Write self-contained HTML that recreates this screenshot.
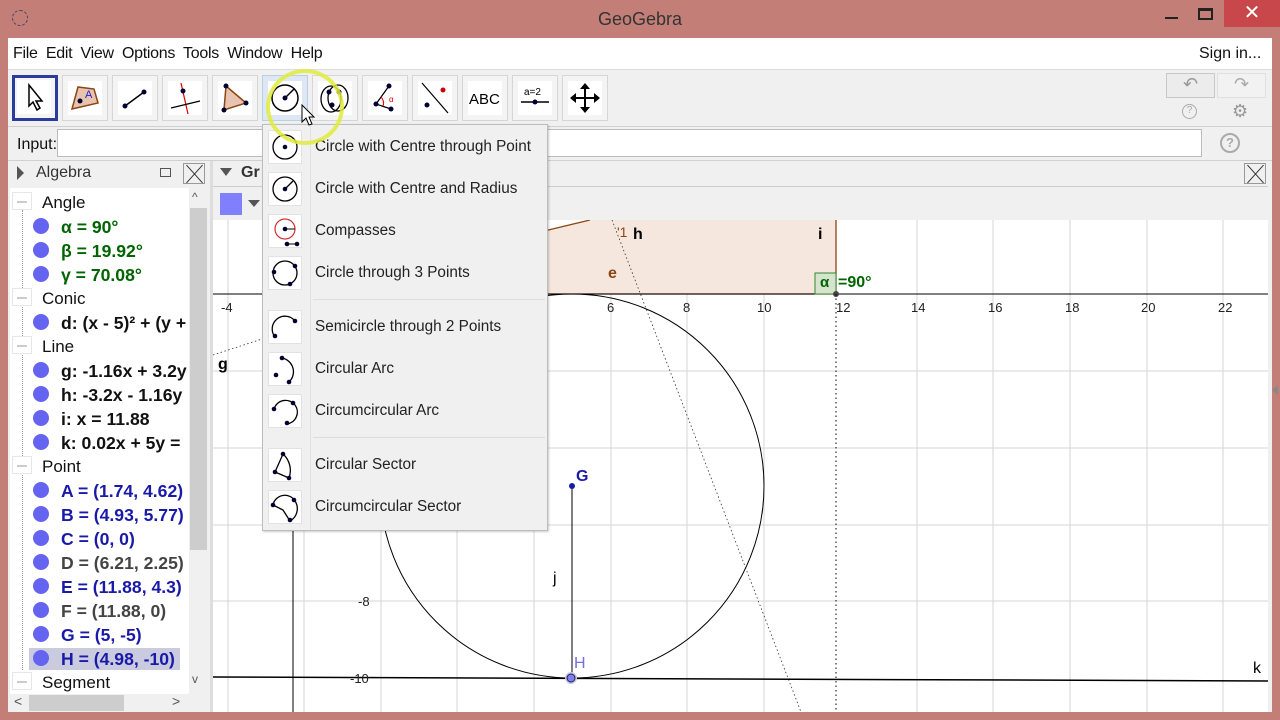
<!DOCTYPE html>
<html><head><meta charset="utf-8"><style>
*{margin:0;padding:0;box-sizing:border-box}
body{width:1280px;height:720px;overflow:hidden;background:#c47e78;font-family:"Liberation Sans",sans-serif;position:relative}
.a{position:absolute}
.tb{position:absolute;top:75px;width:46px;height:46px;background:#f4f4f4;border:1px solid #d6d6d6}
.tb svg{position:absolute;left:5px;top:5px;width:34px;height:34px;background:#fff}
.mi{position:absolute;left:315px;font-size:15.3px;color:#222}
.ib{position:absolute;left:268px;width:34px;height:34px;background:#fff;border:1px solid #e2e2e2}
.al{position:absolute;font-size:17.6px;font-weight:bold;left:61px}
.dot{position:absolute;left:33px;width:16px;height:16px;border-radius:50%;background:#6464f0}
.cat{position:absolute;left:42px;font-size:17px;color:#111}
.minus{position:absolute;left:12px;width:20px;height:18px;border:1px solid #e6e6e6;background:#fff}
.minus:after{content:"";position:absolute;left:4px;top:8px;width:10px;height:2px;background:#ccc}
.x{position:absolute;width:22px;height:21px;border:1px solid #999}
.x:before,.x:after{content:"";position:absolute;left:10px;top:-2px;width:1px;height:24px;background:#333;transform:rotate(42deg)}
.x:after{transform:rotate(-42deg)}
</style></head><body>
<div class="a" style="left:12px;top:10px;width:16px;height:16px;border:1px dashed #446;border-radius:50%"></div>
<div class="a" style="left:0;width:1280px;top:9px;text-align:center;font-size:18px;color:#333">GeoGebra</div>
<div class="a" style="left:1165px;top:17px;width:13px;height:2px;background:#222"></div>
<div class="a" style="left:1198px;top:8px;width:15px;height:12px;border:2px solid #222;border-top-width:3px"></div>
<div class="a" style="left:1224px;top:0;width:56px;height:27px;background:#c7474a;color:#fff;font-size:20px;text-align:center;line-height:27px">✕</div>
<div class="a" style="left:8px;top:38px;width:1264px;height:674px;background:#f0f0f0"></div>
<div class="a" style="left:8px;top:38px;width:1264px;height:32px;background:#fff;border-bottom:1px solid #ddd"></div>
<div class="a" style="left:13px;top:45px;font-size:16px;color:#111;letter-spacing:-0.3px">File&nbsp; Edit&nbsp; View&nbsp; Options&nbsp; Tools&nbsp; Window&nbsp; Help</div>
<div class="a" style="left:1199px;top:45px;font-size:16px;color:#111">Sign in...</div>
<div class="tb" style="left:12px;border:3px solid #2b3d9c"><svg viewBox="0 0 34 34" style="left:2px;top:2px"><path d="M12 5 L12 26 L16 22 L20 30 L23 28 L19 21 L25 21 Z" fill="#fff" stroke="#000" stroke-width="1.5"/></svg></div>
<div class="tb" style="left:62px"><svg viewBox="0 0 34 34"><path d="M4 28 L10 6 L26 8 L30 22 Z" fill="#e8c4b0" stroke="#8b4513" stroke-width="1.5"/><circle cx="12" cy="20" r="2.5" fill="#003"/><text x="17" y="17" font-size="11" fill="#22c" font-family="Liberation Sans">A</text></svg></div>
<div class="tb" style="left:112px"><svg viewBox="0 0 34 34"><line x1="7" y1="25" x2="26" y2="11" stroke="#000" stroke-width="1.5"/><circle cx="7" cy="25" r="2.5" fill="#003"/><circle cx="26" cy="11" r="2.5" fill="#003"/></svg></div>
<div class="tb" style="left:162px"><svg viewBox="0 0 34 34"><line x1="13" y1="2" x2="20" y2="33" stroke="#d00" stroke-width="1.2"/><line x1="3" y1="27" x2="32" y2="20" stroke="#000" stroke-width="1.2"/><circle cx="15" cy="10" r="2.5" fill="#003"/></svg></div>
<div class="tb" style="left:212px"><svg viewBox="0 0 34 34"><path d="M8 5 L28 22 L6 29 Z" fill="#e8c4b0" stroke="#8b4513" stroke-width="1.5"/><circle cx="8" cy="5" r="2.5" fill="#003"/><circle cx="28" cy="22" r="2.5" fill="#003"/><circle cx="6" cy="29" r="2.5" fill="#003"/></svg></div>
<div class="tb" style="left:262px;background:#dde8f4;border-color:#b8cfe6"><svg viewBox="0 0 34 34"><circle cx="17" cy="17" r="13" fill="none" stroke="#000" stroke-width="1.5"/><line x1="17" y1="17" x2="26" y2="8" stroke="#000" stroke-width="1.5"/><circle cx="17" cy="17" r="2.5" fill="#003"/></svg></div>
<div class="tb" style="left:312px"><svg viewBox="0 0 34 34"><ellipse cx="13" cy="18" rx="10" ry="13" fill="none" stroke="#000" stroke-width="1.3"/><ellipse cx="20" cy="17" rx="10" ry="13" fill="none" stroke="#000" stroke-width="1.3"/><circle cx="11" cy="11" r="2.5" fill="#003"/><circle cx="21" cy="11" r="2.5" fill="#003"/><circle cx="14" cy="24" r="2.5" fill="#003"/></svg></div>
<div class="tb" style="left:362px"><svg viewBox="0 0 34 34"><path d="M21 5 L8 23 L23 28" fill="none" stroke="#000" stroke-width="1.3"/><path d="M13 16 A8 8 0 0 1 15 25" fill="#fcc" stroke="#d00"/><circle cx="21" cy="5" r="2.5" fill="#003"/><circle cx="8" cy="23" r="2.5" fill="#003"/><circle cx="23" cy="28" r="2.5" fill="#003"/><text x="21" y="21" font-size="8" fill="#d00">α</text></svg></div>
<div class="tb" style="left:412px"><svg viewBox="0 0 34 34"><line x1="4" y1="2" x2="30" y2="32" stroke="#000" stroke-width="1.2"/><circle cx="25" cy="9" r="2.5" fill="#c00"/><circle cx="9" cy="24" r="2.5" fill="#003"/></svg></div>
<div class="tb" style="left:462px"><svg viewBox="0 0 34 34"><text x="1" y="23" font-size="15" font-family="Liberation Sans" fill="#000">ABC</text></svg></div>
<div class="tb" style="left:512px"><svg viewBox="0 0 34 34"><text x="6" y="14" font-size="10" font-family="Liberation Sans">a=2</text><line x1="3" y1="21" x2="31" y2="21" stroke="#000" stroke-width="1.5"/><circle cx="17" cy="21" r="2.5" fill="#003"/></svg></div>
<div class="tb" style="left:562px"><svg viewBox="0 0 34 34"><path d="M17 4 L17 30 M4 17 L30 17" stroke="#000" stroke-width="2"/><path d="M17 2 L12 8 L22 8Z M17 32 L12 26 L22 26Z M2 17 L8 12 L8 22Z M32 17 L26 12 L26 22Z" fill="#000"/></svg></div>
<div class="a" style="left:1166px;top:73px;width:49px;height:25px;background:#ececec;border:1px solid #c8c8c8;text-align:center;font-size:18px;color:#999">↶</div>
<div class="a" style="left:1217px;top:73px;width:49px;height:25px;background:#f2f2f2;border:1px solid #e0e0e0;text-align:center;font-size:18px;color:#aaa">↷</div>
<div class="a" style="left:1182px;top:104px;width:15px;height:15px;border:1.5px solid #aaa;border-radius:50%;font-size:10px;color:#aaa;text-align:center;line-height:12px">?</div>
<div class="a" style="left:1232px;top:101px;font-size:18px;color:#999">⚙</div>
<div class="a" style="left:8px;top:126px;width:1264px;height:1px;background:#d0d0d0"></div>
<div class="a" style="left:17px;top:136px;font-size:16px;color:#111">Input:</div>
<div class="a" style="left:57px;top:129px;width:1145px;height:28px;background:#fff;border:1px solid #bbb"></div>
<div class="a" style="left:1220px;top:133px;width:20px;height:20px;border:2px solid #aaa;border-radius:50%;font-size:13px;font-weight:bold;color:#aaa;text-align:center;line-height:16px">?</div>
<div class="a" style="left:8px;top:160px;width:1264px;height:1px;background:#d0d0d0"></div>
<div class="a" style="left:17px;top:166px;width:0;height:0;border-left:7px solid #555;border-top:7px solid transparent;border-bottom:7px solid transparent"></div>
<div class="a" style="left:36px;top:164px;font-size:16px;color:#333">Algebra</div>
<div class="a" style="left:160px;top:168px;width:11px;height:9px;border:1.5px solid #555"></div>
<div class="x" style="left:183px;top:163px"></div>
<div class="a" style="left:10px;top:188px;width:179px;height:506px;background:#fff"></div>
<div class="a" style="left:189px;top:188px;width:19px;height:506px;background:#f0f0f0"></div>
<div class="a" style="left:190px;top:208px;width:17px;height:342px;background:#cdcdcd"></div>
<div class="a" style="left:192px;top:190px;font-size:12px;color:#555">^</div>
<div class="a" style="left:192px;top:672px;font-size:12px;color:#555">v</div>
<div class="a" style="left:10px;top:694px;width:198px;height:18px;background:#f0f0f0"></div>
<div class="a" style="left:29px;top:695px;width:95px;height:16px;background:#cdcdcd"></div>
<div class="a" style="left:14px;top:693px;font-size:14px;color:#555">&lt;</div>
<div class="a" style="left:172px;top:693px;font-size:14px;color:#555">&gt;</div>
<div class="a" style="left:22px;top:210px;width:1px;height:460px;border-left:1px dotted #999"></div>
<div class="a" style="left:29px;top:648px;width:151px;height:22px;background:#cbcbe0"></div>
<div class="minus" style="top:192px"></div><div class="cat" style="top:193px">Angle</div>
<div class="dot" style="top:218px"></div><div class="al" style="top:217px;color:#006400">α = 90°</div>
<div class="dot" style="top:242px"></div><div class="al" style="top:241px;color:#006400">β = 19.92°</div>
<div class="dot" style="top:266px"></div><div class="al" style="top:265px;color:#006400">γ = 70.08°</div>
<div class="minus" style="top:288px"></div><div class="cat" style="top:289px">Conic</div>
<div class="dot" style="top:314px"></div><div class="al" style="top:313px;color:#111;white-space:nowrap;width:128px;overflow:hidden">d: (x - 5)² + (y +</div>
<div class="minus" style="top:336px"></div><div class="cat" style="top:337px">Line</div>
<div class="dot" style="top:362px"></div><div class="al" style="top:361px;color:#111;white-space:nowrap;width:128px;overflow:hidden">g: -1.16x + 3.2y</div>
<div class="dot" style="top:386px"></div><div class="al" style="top:385px;color:#111;white-space:nowrap;width:128px;overflow:hidden">h: -3.2x - 1.16y</div>
<div class="dot" style="top:410px"></div><div class="al" style="top:409px;color:#111">i: x = 11.88</div>
<div class="dot" style="top:434px"></div><div class="al" style="top:433px;color:#111;white-space:nowrap;width:128px;overflow:hidden">k: 0.02x + 5y =</div>
<div class="minus" style="top:456px"></div><div class="cat" style="top:457px">Point</div>
<div class="dot" style="top:482px"></div><div class="al" style="top:481px;color:#1a1aa8">A = (1.74, 4.62)</div>
<div class="dot" style="top:506px"></div><div class="al" style="top:505px;color:#1a1aa8">B = (4.93, 5.77)</div>
<div class="dot" style="top:530px"></div><div class="al" style="top:529px;color:#1a1aa8">C = (0, 0)</div>
<div class="dot" style="top:554px"></div><div class="al" style="top:553px;color:#444">D = (6.21, 2.25)</div>
<div class="dot" style="top:578px"></div><div class="al" style="top:577px;color:#1a1aa8">E = (11.88, 4.3)</div>
<div class="dot" style="top:602px"></div><div class="al" style="top:601px;color:#444">F = (11.88, 0)</div>
<div class="dot" style="top:626px"></div><div class="al" style="top:625px;color:#1a1aa8">G = (5, -5)</div>
<div class="dot" style="top:650px"></div><div class="al" style="top:649px;color:#1a1aa8">H = (4.98, -10)</div>
<div class="minus" style="top:672px"></div><div class="cat" style="top:673px">Segment</div>
<div class="a" style="left:210px;top:161px;width:3px;height:551px;background:#ddd"></div>
<div class="a" style="left:220px;top:168px;width:0;height:0;border-top:8px solid #555;border-left:6px solid transparent;border-right:6px solid transparent"></div>
<div class="a" style="left:241px;top:164px;font-size:16px;font-weight:bold;color:#333">Gr</div>
<div class="x" style="left:1244px;top:163px"></div>
<div class="a" style="left:213px;top:186px;width:1055px;height:1px;background:#ccc"></div>
<div class="a" style="left:220px;top:193px;width:22px;height:22px;background:#8080ff"></div>
<div class="a" style="left:248px;top:200px;width:0;height:0;border-top:7px solid #555;border-left:6px solid transparent;border-right:6px solid transparent"></div>
<svg class="a" style="left:213px;top:220px" width="1055" height="492" viewBox="213 220 1055 492">
<rect x="213" y="220" width="1055" height="492" fill="#fff"/>
<g stroke="#d6d6d6" stroke-width="1">
<line x1="228" y1="220" x2="228" y2="712"/><line x1="304" y1="220" x2="304" y2="712"/><line x1="381" y1="220" x2="381" y2="712"/><line x1="457" y1="220" x2="457" y2="712"/><line x1="534" y1="220" x2="534" y2="712"/><line x1="611" y1="220" x2="611" y2="712"/><line x1="687" y1="220" x2="687" y2="712"/><line x1="764" y1="220" x2="764" y2="712"/><line x1="917" y1="220" x2="917" y2="712"/><line x1="993" y1="220" x2="993" y2="712"/><line x1="1070" y1="220" x2="1070" y2="712"/><line x1="1147" y1="220" x2="1147" y2="712"/><line x1="1223" y1="220" x2="1223" y2="712"/>
<line x1="213" y1="371" x2="1268" y2="371"/><line x1="213" y1="448" x2="1268" y2="448"/><line x1="213" y1="525" x2="1268" y2="525"/><line x1="213" y1="601" x2="1268" y2="601"/>
</g>
<path d="M540 232 L590 220 L836 220 L836 294 L540 294Z" fill="#f5e6de"/>
<line x1="540" y1="232" x2="590" y2="220" stroke="#8b4513" stroke-width="1.3"/>
<line x1="540" y1="294" x2="836" y2="294" stroke="#8b4513" stroke-width="1.3"/>
<line x1="836" y1="220" x2="836" y2="294" stroke="#8b4513" stroke-width="1.3"/>
<line x1="213" y1="294" x2="1268" y2="294" stroke="#000" stroke-width="1"/>
<line x1="293" y1="220" x2="293" y2="712" stroke="#000" stroke-width="1"/>
<rect x="815" y="273" width="21" height="21" fill="#d6e3cf" stroke="#2d8b2d"/>
<text x="820" y="287" font-size="15" font-weight="bold" fill="#006400" font-family="Liberation Sans">α</text>
<text x="838" y="287" font-size="16" font-weight="bold" fill="#006400" font-family="Liberation Sans">=90°</text>
<circle cx="836" cy="294" r="3" fill="#444"/>
<line x1="836" y1="294" x2="836" y2="712" stroke="#000" stroke-dasharray="1.5 3"/>
<line x1="612" y1="220" x2="801" y2="712" stroke="#333" stroke-width="0.8" stroke-dasharray="1.5 2.5"/>
<line x1="213" y1="355" x2="265" y2="338" stroke="#333" stroke-width="0.8" stroke-dasharray="1.5 2.5"/>
<circle cx="572" cy="486" r="192" fill="none" stroke="#000" stroke-width="1"/>
<line x1="213" y1="677" x2="1268" y2="681" stroke="#000" stroke-width="1.5"/>
<line x1="572" y1="486" x2="572" y2="678" stroke="#000"/>
<circle cx="572" cy="486" r="3" fill="#1a1aa8"/>
<circle cx="571" cy="678" r="6" fill="#c8c8f0"/><circle cx="571" cy="678" r="4" fill="#8080f0" stroke="#224"/>
<g font-family="Liberation Sans" font-size="13" fill="#222">
<text x="221" y="312">-4</text><text x="607" y="312">6</text><text x="683" y="312">8</text><text x="757" y="312">10</text><text x="836" y="312">12</text><text x="911" y="312">14</text><text x="988" y="312">16</text><text x="1065" y="312">18</text><text x="1141" y="312">20</text><text x="1218" y="312">22</text>
<text x="358" y="606">-8</text><text x="350" y="683">-10</text></g>
<g font-family="Liberation Sans" font-size="16" font-weight="bold">
<text x="633" y="239" fill="#000">h</text><text x="818" y="239" fill="#000">i</text><text x="608" y="278" fill="#8b4513">e</text><text x="218" y="369" fill="#000">g</text><text x="576" y="481" fill="#1a1aa8">G</text></g>
<text x="553" y="583" font-size="16" font-family="Liberation Sans">j</text>
<text x="574" y="668" font-size="16" fill="#7070e0" font-family="Liberation Sans">H</text>
<text x="1253" y="673" font-size="16" font-family="Liberation Sans">k</text>
<text x="617" y="237" font-size="14" fill="#8b4513" font-family="Liberation Sans">'1</text>
</svg>
<div class="a" style="left:1268px;top:186px;width:4px;height:526px;background:#f0f0f0"></div>
<div class="a" style="left:1272px;top:385px;width:0;height:0;border-right:6px solid #888;border-top:5px solid transparent;border-bottom:5px solid transparent"></div>
<div class="a" style="left:262px;top:124px;width:286px;height:407px;background:#f0f0f0;border:1px solid #bdbdbd;box-shadow:1px 1px 2px rgba(0,0,0,.2)"></div>
<div class="a" style="left:310px;top:125px;width:1px;height:405px;background:#e2e2e2"></div>
<div class="a" style="left:313px;top:299px;width:232px;height:1px;background:#ddd"></div>
<div class="a" style="left:313px;top:437px;width:232px;height:1px;background:#ddd"></div>
<div class="ib" style="top:130px"><svg width="32" height="32" viewBox="0 0 32 32"><circle cx="16" cy="16" r="12" fill="none" stroke="#000" stroke-width="1.3"/><circle cx="16" cy="16" r="2.3" fill="#003"/></svg></div>
<div class="ib" style="top:172px"><svg width="32" height="32" viewBox="0 0 32 32"><circle cx="16" cy="16" r="12" fill="none" stroke="#000" stroke-width="1.3"/><line x1="16" y1="16" x2="24" y2="8" stroke="#000" stroke-width="1.3"/><circle cx="16" cy="16" r="2.3" fill="#003"/></svg></div>
<div class="ib" style="top:214px"><svg width="32" height="32" viewBox="0 0 32 32"><circle cx="16" cy="14" r="10" fill="none" stroke="#d03030" stroke-width="1.2"/><line x1="16" y1="14" x2="26" y2="14" stroke="#000"/><circle cx="16" cy="14" r="2.3" fill="#003"/><line x1="18" y1="29" x2="28" y2="29" stroke="#000"/><circle cx="18" cy="29" r="2.3" fill="#003"/><circle cx="28" cy="29" r="2.3" fill="#003"/></svg></div>
<div class="ib" style="top:256px"><svg width="32" height="32" viewBox="0 0 32 32"><circle cx="16" cy="16" r="12" fill="none" stroke="#000" stroke-width="1.3"/><circle cx="5" cy="15" r="2.3" fill="#003"/><circle cx="26" cy="9" r="2.3" fill="#003"/><circle cx="21" cy="27" r="2.3" fill="#003"/></svg></div>
<div class="ib" style="top:310px"><svg width="32" height="32" viewBox="0 0 32 32"><path d="M6 26 A11 11 0 0 1 26 10" fill="none" stroke="#000" stroke-width="1.3"/><circle cx="6" cy="25" r="2.3" fill="#003"/><circle cx="26" cy="10" r="2.3" fill="#003"/></svg></div>
<div class="ib" style="top:352px"><svg width="32" height="32" viewBox="0 0 32 32"><path d="M13 5 A14 14 0 0 1 20 29" fill="none" stroke="#000" stroke-width="1.3"/><circle cx="13" cy="5" r="2.3" fill="#003"/><circle cx="7" cy="22" r="2.3" fill="#003"/><circle cx="20" cy="29" r="2.3" fill="#003"/></svg></div>
<div class="ib" style="top:394px"><svg width="32" height="32" viewBox="0 0 32 32"><path d="M5 14 A12 12 0 0 1 26 10 A12 12 0 0 1 18 29" fill="none" stroke="#000" stroke-width="1.3"/><circle cx="5" cy="14" r="2.3" fill="#003"/><circle cx="24" cy="8" r="2.3" fill="#003"/><circle cx="18" cy="28" r="2.3" fill="#003"/></svg></div>
<div class="ib" style="top:448px"><svg width="32" height="32" viewBox="0 0 32 32"><path d="M14 5 L6 23 L20 29 A22 22 0 0 0 14 5Z" fill="none" stroke="#000" stroke-width="1.3"/><circle cx="14" cy="5" r="2.3" fill="#003"/><circle cx="6" cy="23" r="2.3" fill="#003"/><circle cx="20" cy="29" r="2.3" fill="#003"/></svg></div>
<div class="ib" style="top:490px"><svg width="32" height="32" viewBox="0 0 32 32"><path d="M4 14 A12 12 0 0 1 26 10 A14 14 0 0 1 21 30 L14 19 L4 14" fill="none" stroke="#000" stroke-width="1.3"/><circle cx="4" cy="14" r="2.3" fill="#003"/><circle cx="25" cy="9" r="2.3" fill="#003"/><circle cx="21" cy="29" r="2.3" fill="#003"/></svg></div>
<div class="mi" style="top:138px">Circle with Centre through Point</div>
<div class="mi" style="top:180px">Circle with Centre and Radius</div>
<div class="mi" style="top:222px">Compasses</div>
<div class="mi" style="top:264px">Circle through 3 Points</div>
<div class="mi" style="top:318px">Semicircle through 2 Points</div>
<div class="mi" style="top:360px">Circular Arc</div>
<div class="mi" style="top:402px">Circumcircular Arc</div>
<div class="mi" style="top:456px">Circular Sector</div>
<div class="mi" style="top:498px">Circumcircular Sector</div>
<div class="a" style="left:266px;top:69px;width:78px;height:76px;border:4px solid rgba(225,235,60,.85);border-radius:50%"></div>
<svg class="a" style="left:300px;top:104px" width="16" height="24"><path d="M2 1 L2 18 L6 14 L9 21 L12 20 L9 13 L14 13Z" fill="#fff" stroke="#000"/></svg>
</body></html>
